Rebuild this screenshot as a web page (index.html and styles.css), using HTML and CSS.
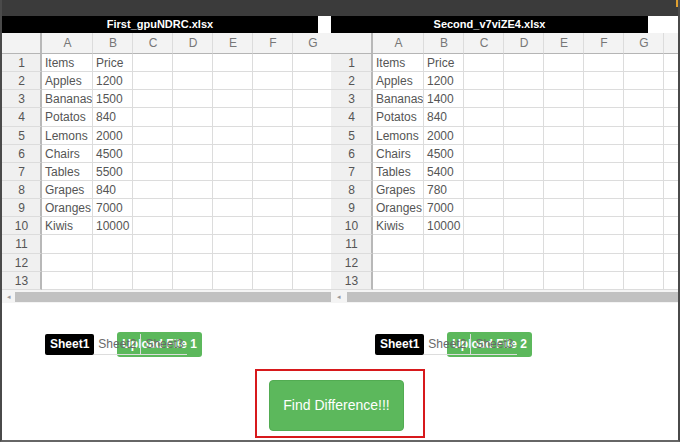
FILE: index.html
```html
<!DOCTYPE html>
<html>
<head>
<meta charset="utf-8">
<link rel="stylesheet" href="styles.css">
</head>
<body>
<div class="page">
  <div class="topbar"><span class="topmark"></span></div>
  <div class="panels">
    <section class="panel panel-left">
      <div class="title-row"><div class="title">First_gpuNDRC.xlsx</div></div>
      <div class="grid-wrap">
        <div class="grid">
          <div class="c corner"></div><div class="c hd">A</div><div class="c hd">B</div><div class="c hd">C</div><div class="c hd">D</div><div class="c hd">E</div><div class="c hd">F</div><div class="c hd">G</div>
          <div class="c rn">1</div><div class="c">Items</div><div class="c">Price</div><div class="c"></div><div class="c"></div><div class="c"></div><div class="c"></div><div class="c"></div>
          <div class="c rn">2</div><div class="c">Apples</div><div class="c">1200</div><div class="c"></div><div class="c"></div><div class="c"></div><div class="c"></div><div class="c"></div>
          <div class="c rn">3</div><div class="c">Bananas</div><div class="c">1500</div><div class="c"></div><div class="c"></div><div class="c"></div><div class="c"></div><div class="c"></div>
          <div class="c rn">4</div><div class="c">Potatos</div><div class="c">840</div><div class="c"></div><div class="c"></div><div class="c"></div><div class="c"></div><div class="c"></div>
          <div class="c rn">5</div><div class="c">Lemons</div><div class="c">2000</div><div class="c"></div><div class="c"></div><div class="c"></div><div class="c"></div><div class="c"></div>
          <div class="c rn">6</div><div class="c">Chairs</div><div class="c">4500</div><div class="c"></div><div class="c"></div><div class="c"></div><div class="c"></div><div class="c"></div>
          <div class="c rn">7</div><div class="c">Tables</div><div class="c">5500</div><div class="c"></div><div class="c"></div><div class="c"></div><div class="c"></div><div class="c"></div>
          <div class="c rn">8</div><div class="c">Grapes</div><div class="c">840</div><div class="c"></div><div class="c"></div><div class="c"></div><div class="c"></div><div class="c"></div>
          <div class="c rn">9</div><div class="c">Oranges</div><div class="c">7000</div><div class="c"></div><div class="c"></div><div class="c"></div><div class="c"></div><div class="c"></div>
          <div class="c rn">10</div><div class="c">Kiwis</div><div class="c">10000</div><div class="c"></div><div class="c"></div><div class="c"></div><div class="c"></div><div class="c"></div>
          <div class="c rn">11</div><div class="c"></div><div class="c"></div><div class="c"></div><div class="c"></div><div class="c"></div><div class="c"></div><div class="c"></div>
          <div class="c rn">12</div><div class="c"></div><div class="c"></div><div class="c"></div><div class="c"></div><div class="c"></div><div class="c"></div><div class="c"></div>
          <div class="c rn">13</div><div class="c"></div><div class="c"></div><div class="c"></div><div class="c"></div><div class="c"></div><div class="c"></div><div class="c"></div>
        </div>
      </div>
      <div class="hscroll"><span class="arrow">&#9666;</span><span class="thumb"></span></div>
      <div class="tabbar">
        <div class="tabs">
          <span class="tab tab-active">Sheet1</span><span class="tab tab-sep">Sheet2</span><span class="tab">Sheet3</span>
        </div>
        <button class="upload">Upload File 1</button>
      </div>
    </section>

    <section class="panel panel-right">
      <div class="title-row"><div class="title">Second_v7viZE4.xlsx</div></div>
      <div class="grid-wrap">
        <div class="grid">
          <div class="c corner"></div><div class="c hd">A</div><div class="c hd">B</div><div class="c hd">C</div><div class="c hd">D</div><div class="c hd">E</div><div class="c hd">F</div><div class="c hd">G</div><div class="c hd">H</div>
          <div class="c rn">1</div><div class="c">Items</div><div class="c">Price</div><div class="c"></div><div class="c"></div><div class="c"></div><div class="c"></div><div class="c"></div><div class="c"></div>
          <div class="c rn">2</div><div class="c">Apples</div><div class="c">1200</div><div class="c"></div><div class="c"></div><div class="c"></div><div class="c"></div><div class="c"></div><div class="c"></div>
          <div class="c rn">3</div><div class="c">Bananas</div><div class="c">1400</div><div class="c"></div><div class="c"></div><div class="c"></div><div class="c"></div><div class="c"></div><div class="c"></div>
          <div class="c rn">4</div><div class="c">Potatos</div><div class="c">840</div><div class="c"></div><div class="c"></div><div class="c"></div><div class="c"></div><div class="c"></div><div class="c"></div>
          <div class="c rn">5</div><div class="c">Lemons</div><div class="c">2000</div><div class="c"></div><div class="c"></div><div class="c"></div><div class="c"></div><div class="c"></div><div class="c"></div>
          <div class="c rn">6</div><div class="c">Chairs</div><div class="c">4500</div><div class="c"></div><div class="c"></div><div class="c"></div><div class="c"></div><div class="c"></div><div class="c"></div>
          <div class="c rn">7</div><div class="c">Tables</div><div class="c">5400</div><div class="c"></div><div class="c"></div><div class="c"></div><div class="c"></div><div class="c"></div><div class="c"></div>
          <div class="c rn">8</div><div class="c">Grapes</div><div class="c">780</div><div class="c"></div><div class="c"></div><div class="c"></div><div class="c"></div><div class="c"></div><div class="c"></div>
          <div class="c rn">9</div><div class="c">Oranges</div><div class="c">7000</div><div class="c"></div><div class="c"></div><div class="c"></div><div class="c"></div><div class="c"></div><div class="c"></div>
          <div class="c rn">10</div><div class="c">Kiwis</div><div class="c">10000</div><div class="c"></div><div class="c"></div><div class="c"></div><div class="c"></div><div class="c"></div><div class="c"></div>
          <div class="c rn">11</div><div class="c"></div><div class="c"></div><div class="c"></div><div class="c"></div><div class="c"></div><div class="c"></div><div class="c"></div><div class="c"></div>
          <div class="c rn">12</div><div class="c"></div><div class="c"></div><div class="c"></div><div class="c"></div><div class="c"></div><div class="c"></div><div class="c"></div><div class="c"></div>
          <div class="c rn">13</div><div class="c"></div><div class="c"></div><div class="c"></div><div class="c"></div><div class="c"></div><div class="c"></div><div class="c"></div><div class="c"></div>
        </div>
      </div>
      <div class="hscroll"><span class="arrow">&#9666;</span><span class="thumb"></span></div>
      <div class="tabbar">
        <div class="tabs">
          <span class="tab tab-active">Sheet1</span><span class="tab tab-sep">Sheet2</span><span class="tab">Sheet3</span>
        </div>
        <button class="upload">Upload File 2</button>
      </div>
    </section>
  </div>

  <div class="find-row">
    <div class="find-frame">
      <button class="find-btn">Find Difference!!!</button>
    </div>
  </div>
</div>
</body>
</html>
```

FILE: styles.css
```css
* { box-sizing: border-box; }
html, body { margin: 0; padding: 0; background: #fff; }
body { font-family: "Liberation Sans", Arial, sans-serif; }

.page {
  width: 680px;
  height: 442px;
  border-left: 2px solid #4a4a4a;
  border-right: 2px solid #4a4a4a;
  border-bottom: 2px solid #666;
  display: flex;
  flex-direction: column;
  overflow: hidden;
}

.topbar {
  height: 16px;
  background: #3b3b3b;
  display: flex;
  justify-content: flex-end;
  flex-shrink: 0;
}
.topmark {
  width: 2px;
  height: 7px;
  background: #e0a030;
}

.panels { display: flex; }
.panel { display: flex; flex-direction: column; }
.panel-left { width: 329px; }
.panel-right { width: 347px; }

.title-row { height: 17px; background: #fff; display: flex; }
.title {
  background: #000;
  color: #fff;
  font-weight: bold;
  font-size: 11px;
  line-height: 17px;
  text-align: center;
}
.panel-left .title { width: 316px; }
.panel-right .title { width: 317px; }

.grid-wrap { overflow: hidden; }
.grid {
  display: grid;
  grid-template-rows: 21px repeat(13, 18.15px);
  font-size: 12px;
  color: #555;
}
.panel-left .grid { grid-template-columns: 40px 51px repeat(6, 40px); width: 331px; }
.panel-right .grid { grid-template-columns: 42px 51px repeat(7, 40px); width: 373px; }

.c {
  border-right: 1px solid #dcdcdc;
  border-bottom: 1px solid #dcdcdc;
  padding: 0 2px 0 3px;
  line-height: 18px;
  white-space: nowrap;
  overflow: hidden;
}
.hd, .corner {
  background: #f3f3f3;
  color: #777;
  text-align: center;
  line-height: 20px;
  border-bottom: 1px solid #b5b5b5;
}
.corner { border-right: 2px solid #b8b8b8; }
.rn {
  background: #f0f0f0;
  color: #555;
  text-align: center;
  border-right: 2px solid #b8b8b8;
}

.hscroll {
  height: 13px;
  display: flex;
  align-items: center;
  background: #f4f4f4;
}
.arrow {
  width: 13px;
  font-size: 7px;
  color: #999;
  text-align: center;
  line-height: 13px;
}
.panel-right .arrow { width: 16px; }
.thumb {
  flex: 1;
  height: 10px;
  margin-top: 2px;
  background: #c1c1c1;
}

.tabbar {
  position: relative;
  margin-top: 29px;
  height: 25px;
}
.tabs {
  position: relative;
  z-index: 2;
  display: flex;
  align-items: center;
  height: 25px;
  padding-left: 43px;
  font-size: 12px;
}
.panel-right .tabs { padding-left: 44px; }
.tab {
  height: 21px;
  line-height: 21px;
  padding: 0 4px;
  color: #6a6a6a;
  border-bottom: 1px solid #ddd;
}
.tab-sep { border-right: 1px solid #ddd; }
.tab-active {
  background: #000;
  color: #fff;
  font-weight: bold;
  border-radius: 2px;
  border-bottom: none;
  padding: 0 5px;
}
.upload {
  position: absolute;
  z-index: 1;
  left: 115px;
  top: 0;
  width: 85px;
  height: 25px;
  padding: 0;
  border: none;
  border-radius: 3px;
  background: #5cb85c;
  color: #fff;
  font-family: "Liberation Sans", Arial, sans-serif;
  font-size: 12px;
  font-weight: bold;
}
.panel-right .upload { left: 116px; }

.find-row {
  display: flex;
  justify-content: center;
  margin-top: 12px;
}
.find-frame {
  width: 170px;
  height: 69px;
  border: 2px solid #d7191c;
  padding: 9px 19px 5px 12px;
}
.find-btn {
  width: 135px;
  height: 51px;
  padding: 0;
  border: 1px solid #52ac52;
  border-radius: 4px;
  background: #5cb85c;
  color: #fff;
  font-family: "Liberation Sans", Arial, sans-serif;
  font-size: 14px;
}
```
